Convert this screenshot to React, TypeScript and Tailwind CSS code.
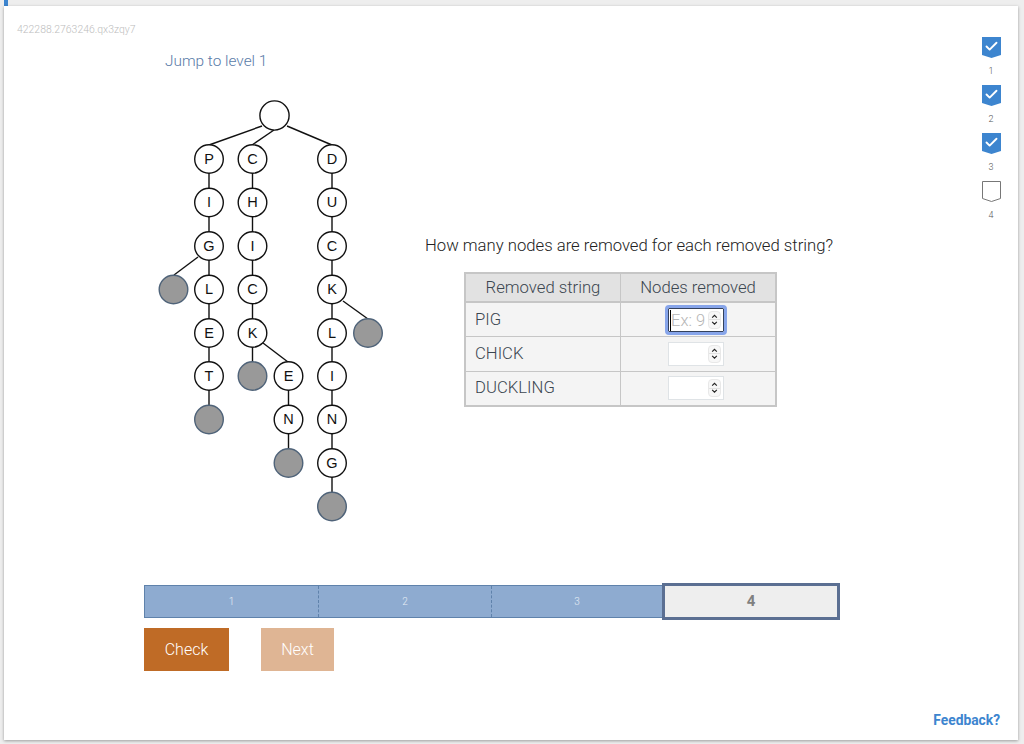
import { Check } from 'lucide-react';

const nodes = [
  { x: 209, y: 158, c: 'P' }, { x: 209, y: 201.5, c: 'I' }, { x: 209, y: 245, c: 'G' }, { x: 209, y: 288.5, c: 'L' },
  { x: 209, y: 332, c: 'E' }, { x: 209, y: 375, c: 'T' }, { x: 209, y: 418.5, c: '' }, { x: 173.5, y: 288.5, c: '' },
  { x: 252.5, y: 158, c: 'C' }, { x: 252.5, y: 201.5, c: 'H' }, { x: 252.5, y: 245, c: 'I' }, { x: 252.5, y: 288.5, c: 'C' },
  { x: 252.5, y: 332, c: 'K' }, { x: 252.5, y: 375, c: '' }, { x: 288.5, y: 375, c: 'E' }, { x: 288.5, y: 418.5, c: 'N' },
  { x: 288.5, y: 462, c: '' },
  { x: 332, y: 158, c: 'D' }, { x: 332, y: 201.5, c: 'U' }, { x: 332, y: 245, c: 'C' }, { x: 332, y: 288.5, c: 'K' },
  { x: 332, y: 332, c: 'L' }, { x: 332, y: 375, c: 'I' }, { x: 332, y: 418.5, c: 'N' }, { x: 332, y: 462, c: 'G' },
  { x: 332, y: 505.5, c: '' }, { x: 368, y: 332, c: '' },
];

const edges = [
  [262, 125, 209, 144], [274, 129, 252, 144], [287, 125, 332, 144],
  [209, 158, 209, 418], [252.5, 158, 252.5, 375], [332, 158, 332, 505],
  [198, 256, 174, 274], [263, 342, 288, 361], [288.5, 375, 288.5, 462], [343, 300, 368, 318],
];

function Tree() {
  return (
    <svg width="240" height="440" viewBox="150 90 240 440" className="shrink-0">
      {edges.map((e, i) => (
        <line key={i} x1={e[0]} y1={e[1]} x2={e[2]} y2={e[3]} stroke="#111" strokeWidth="1.4" />
      ))}
      <circle cx="274.5" cy="114.5" r="14.6" fill="#fff" stroke="#111" strokeWidth="1.4" />
      {nodes.map((n, i) => n.c ? (
        <g key={i}>
          <circle cx={n.x} cy={n.y} r="14.3" fill="#fff" stroke="#111" strokeWidth="1.4" />
          <text x={n.x} y={n.y + 4.7} textAnchor="middle" fontSize="14.5" fill="#111" fontFamily="'Liberation Sans', sans-serif">{n.c}</text>
        </g>
      ) : (
        <circle key={i} cx={n.x} cy={n.y} r="14.3" fill="#999999" stroke="#4f6379" strokeWidth="1.4" />
      ))}
    </svg>
  );
}

function Badge({ n, done }: { n: number; done: boolean }) {
  return (
    <div className="flex flex-col items-center h-[48px]">
      <div className="relative w-[19px] h-[21px]">
        <svg width="19" height="21" viewBox="0 0 19 21">
          {done
            ? <path d="M0 0H19V18L9.5 21L0 18Z" fill="#3d85cf" />
            : <path d="M.5.5H18.5V17.5L9.5 20.5L.5 17.5Z" fill="#fff" stroke="#777" />}
        </svg>
        {done && <Check className="absolute left-[2px] top-[1.5px] text-white" size={15} strokeWidth={3} />}
      </div>
      <span className="mt-[8px] text-[9px] leading-[10px] text-[#555] font-light">{n}</span>
    </div>
  );
}

function Stepper() {
  return (
    <div className="absolute right-[2px] top-[2px] w-[13px] h-[18px] rounded-[4px] bg-[#f7f7f7] border border-[#e8e8e8] flex flex-col items-center justify-between py-[1px]">
      <svg width="9" height="7" viewBox="0 0 9 7"><path d="M2 5L4.5 2.5L7 5" fill="none" stroke="#222" strokeWidth="1.2" /></svg>
      <div className="w-full h-px bg-[#e2e2e2]" />
      <svg width="9" height="7" viewBox="0 0 9 7"><path d="M2 2L4.5 4.5L7 2" fill="none" stroke="#222" strokeWidth="1.2" /></svg>
    </div>
  );
}

function NumberBox({ focused }: { focused?: boolean }) {
  return (
    <div className={focused
      ? 'relative w-[56px] h-[24px] ml-[47px] bg-white border border-[#33415c] outline-[3px] outline-[#87a5ea] rounded-[1px] text-left'
      : 'relative w-[56px] h-[24px] ml-[47px] bg-white border border-[#dfe3e6] text-left'}>
      {focused && <span className="block text-[16.5px] leading-[22px] font-light text-[#b5b5b5] whitespace-nowrap border-l border-black ml-[1px] h-[21px] mt-[1px]">Ex: 9</span>}
      <Stepper />
    </div>
  );
}

const rows = ['PIG', 'CHICK', 'DUCKLING'];

export default function App() {
  return (
    <div className="relative h-[744px] bg-[#eeeeee] pt-[6px] pl-[4px] overflow-hidden font-['Roboto',sans-serif]">
      <div className="absolute left-[4px] top-0 w-[4px] h-[6px] bg-[#3d85cf]" />
      <div className="relative w-[1014px] h-[734px] bg-white shadow-[0_1px_3px_rgba(0,0,0,0.35)] flex">
        <div className="flex-1 flex flex-col">
          <div className="pl-[13px] pt-[18px] text-[10.45px] leading-[12px] text-[#bdbdbd] font-light">422288.2763246.qx3zqy7</div>
          <div className="pl-[161px] mt-[15px] text-[15.4px] leading-[20px] text-[#5a7ba8] font-light">Jump to level 1</div>

          <div className="flex mt-[20px] pl-[146px]">
            <Tree />
            <div className="ml-[35px] mt-[144px] w-[410px]">
              <p className="text-[16.7px] leading-[22px] font-light text-[#222] whitespace-nowrap">How many nodes are removed for each removed string?</p>
              <table className="mt-[15px] ml-[39px] w-[313px] border-collapse border-2 border-[#c6c6c6] bg-[#f4f4f4] text-[16.7px] font-light text-[#3b4650] table-fixed">
                <thead>
                  <tr className="h-[29px] bg-[#e2e2e2]">
                    <th className="border border-[#c6c6c6] border-b-2 font-light text-center">Removed string</th>
                    <th className="border border-[#c6c6c6] border-b-2 font-light text-center">Nodes removed</th>
                  </tr>
                </thead>
                <tbody>
                  {rows.map((r, i) => (
                    <tr key={r} className="h-[34.5px]">
                      <td className="border border-[#c6c6c6] pl-[9px]">{r}</td>
                      <td className="border border-[#c6c6c6]"><NumberBox focused={i === 0} /></td>
                    </tr>
                  ))}
                </tbody>
              </table>
            </div>
          </div>

          <div className="flex items-center mt-[52px] ml-[140px] w-[696px] h-[37px]">
            <div className="flex w-[519px] h-[33px] bg-[#8eabd0] border border-[#5f82ab] text-[10px] font-light text-[#e6edf5]">
              <div className="w-[174px] flex items-center justify-center border-r border-dashed border-[#5f82ab]">1</div>
              <div className="w-[173px] flex items-center justify-center border-r border-dashed border-[#5f82ab]">2</div>
              <div className="flex-1 flex items-center justify-center">3</div>
            </div>
            <div className="flex-1 h-[37px] -ml-[1px] flex items-center justify-center bg-[#eeeeee] border-[3px] border-[#5b6f92] text-[15px] font-bold text-[#808080]">4</div>
          </div>

          <div className="flex mt-[8px] ml-[140px] gap-[32px]">
            <button className="w-[85px] h-[43px] bg-[#bf6b26] text-white text-[16px] font-light">Check</button>
            <button className="w-[73px] h-[43px] bg-[#dfb594] text-white text-[16px] font-light">Next</button>
          </div>

          <div className="flex-1 flex items-end justify-end pb-[12px] pr-[18px]">
            <span className="text-[13.8px] leading-[16px] font-bold text-[#3d85cf]">Feedback?</span>
          </div>
        </div>

        <div className="absolute right-[9px] top-[31px] w-[36px] flex flex-col items-center">
          <Badge n={1} done />
          <Badge n={2} done />
          <Badge n={3} done />
          <Badge n={4} done={false} />
        </div>
      </div>
    </div>
  );
}
